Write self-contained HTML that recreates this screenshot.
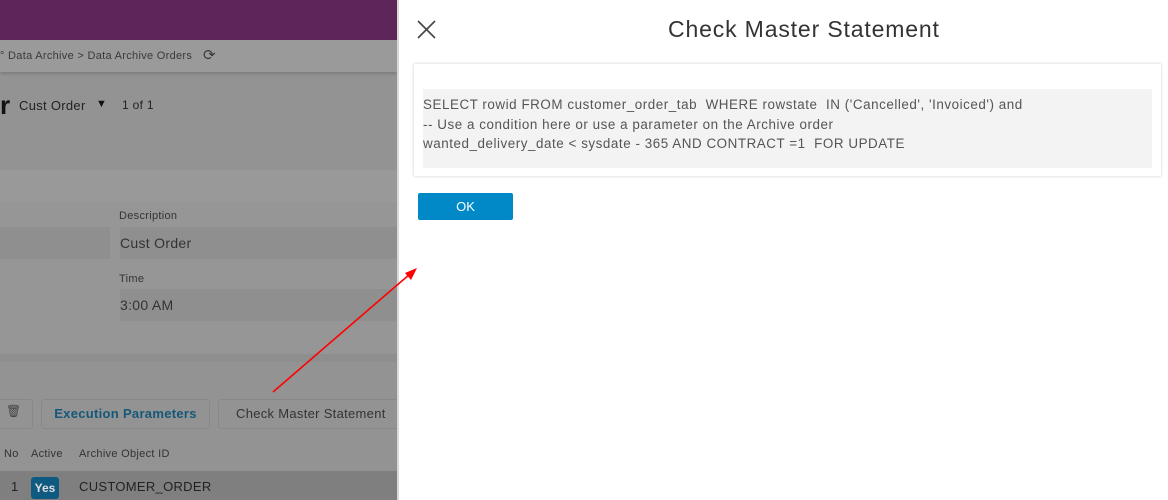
<!DOCTYPE html>
<html><head><style>
*{margin:0;padding:0;box-sizing:border-box}
body{width:1168px;height:500px;overflow:hidden;font-family:"Liberation Sans",sans-serif;position:relative;background:#fff}
.l{position:absolute;left:0;top:0;width:397px;height:500px;background:#939393;overflow:hidden}
.a{position:absolute}
.l .a{letter-spacing:0.3px}
</style></head><body>
<div class="l">
<div class="a" style="left:0;top:0;width:397px;height:40px;background:#5e255a"></div>
<div class="a" style="left:0;top:40px;width:397px;height:32px;background:#9a9a9a;box-shadow:0 2px 3px rgba(0,0,0,.15)"></div>
<div class="a" style="left:0;top:50px;font-size:11px;color:#3a3a3a">° Data Archive &gt; Data Archive Orders</div>
<div class="a" style="left:203px;top:46px;font-size:15px;color:#3a3a3a">⟳</div>
<div class="a" style="left:0;top:90px;font-size:26px;font-weight:bold;color:#111">r</div>
<div class="a" style="left:19px;top:98px;font-size:13px;color:#222">Cust Order</div>
<div class="a" style="left:96px;top:98px;font-size:11px;color:#111">▼</div>
<div class="a" style="left:122px;top:98px;font-size:12px;color:#222">1 of 1</div>
<div class="a" style="left:0;top:170px;width:397px;height:32px;background:#999"></div>
<div class="a" style="left:0;top:202px;width:397px;height:152px;background:#969696"></div>
<div class="a" style="left:119px;top:210px;font-size:11px;color:#333">Description</div>
<div class="a" style="left:0;top:227px;width:110px;height:32px;background:#8f8f8f"></div>
<div class="a" style="left:120px;top:227px;width:277px;height:32px;background:#8f8f8f"></div>
<div class="a" style="left:120px;top:235px;font-size:14px;color:#333">Cust Order</div>
<div class="a" style="left:119px;top:273px;font-size:11px;color:#333">Time</div>
<div class="a" style="left:120px;top:289px;width:277px;height:32px;background:#8f8f8f"></div>
<div class="a" style="left:120px;top:297px;font-size:14px;color:#333">3:00 AM</div>
<div class="a" style="left:0;top:354px;width:397px;height:8px;background:#8e8e8e"></div>
<div class="a" style="left:0;top:390px;width:397px;height:50px;background:#939393"></div>
<div class="a" style="left:-5px;top:399px;width:38px;height:30px;border:1px solid #888;border-radius:3px"></div>
<div class="a" style="left:6px;top:404px;font-size:12px;color:#444">🗑</div>
<div class="a" style="left:41px;top:399px;width:169px;height:30px;border:1px solid #888;border-radius:3px;font-size:13px;font-weight:bold;color:#15587a;text-align:center;line-height:28px">Execution Parameters</div>
<div class="a" style="left:218px;top:399px;width:185px;height:30px;border:1px solid #888;border-radius:3px;font-size:13px;color:#333;line-height:28px;padding-left:17px">Check Master Statement</div>
<div class="a" style="left:4px;top:448px;font-size:11px;color:#333">No</div>
<div class="a" style="left:31px;top:448px;font-size:11px;color:#333">Active</div>
<div class="a" style="left:79px;top:448px;font-size:11px;color:#333">Archive Object ID</div>
<div class="a" style="left:0;top:471px;width:397px;height:29px;background:#7f7f7f"></div>
<div class="a" style="left:11px;top:479px;font-size:13px;color:#222">1</div>
<div class="a" style="left:31px;top:477px;width:28px;height:22px;background:#0f5a80;border-radius:3px;color:#ddd;font-size:12px;font-weight:bold;text-align:center;line-height:22px;letter-spacing:0">Yes</div>
<div class="a" style="left:79px;top:479px;font-size:13px;color:#222">CUSTOMER_ORDER</div>
</div>
<div class="a" style="left:397px;top:0;width:2px;height:500px;background:#d8d8d8"></div>
<svg class="a" style="left:416px;top:19px" width="22" height="22"><path d="M2 2L19 19M19 2L2 19" stroke="#444" stroke-width="1.6" fill="none"/></svg>
<div class="a" style="left:668px;top:16px;font-size:23px;color:#333;letter-spacing:0.85px">Check Master Statement</div>
<div class="a" style="left:414px;top:64px;width:747px;height:112px;background:#fff;box-shadow:0 0 3px rgba(0,0,0,.2)"></div>
<div class="a" style="left:423px;top:89px;width:729px;height:79px;background:#f3f3f3;padding:6px 0 0 0;font-size:13.4px;line-height:19.5px;color:#555;white-space:pre;letter-spacing:0.55px">SELECT rowid FROM customer_order_tab  WHERE rowstate  IN ('Cancelled', 'Invoiced') and
-- Use a condition here or use a parameter on the Archive order
wanted_delivery_date &lt; sysdate - 365 AND CONTRACT =1  FOR UPDATE</div>
<div class="a" style="left:418px;top:193px;width:95px;height:27px;background:#0089c6;border-radius:2px;color:#fff;font-size:13px;text-align:center;line-height:27px">OK</div>
<svg class="a" style="left:0;top:0" width="1168" height="500"><line x1="273" y1="392" x2="410" y2="274" stroke="#f00" stroke-width="1.6"/><polygon points="417,268 405,273 411,280" fill="#f00"/></svg>
</body></html>
